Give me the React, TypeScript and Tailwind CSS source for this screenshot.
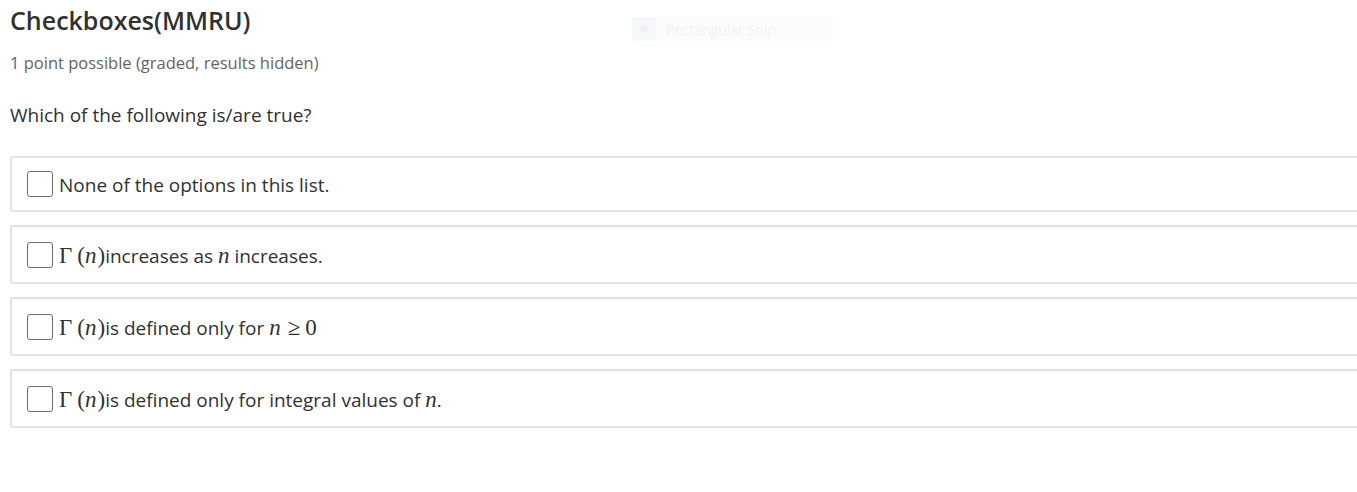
const font = { fontFamily: '"Open Sans", "Noto Sans", sans-serif' };

function Gamma() {
  return (
    <span className="font-['Liberation_Serif',serif] text-[23px] leading-none">
      Γ<span className="ml-[5px]">(</span>
      <i className="mr-[1px]">n</i>)
    </span>
  );
}

function N() {
  return <i className="font-['Liberation_Serif',serif] text-[23px] leading-none">n</i>;
}

const options: React.ReactNode[] = [
  <>None of the options in this list.</>,
  <>
    <Gamma />
    increases as <N /> increases.
  </>,
  <>
    <Gamma />
    is defined only for <N />
    <span className="font-['Liberation_Serif',serif] text-[23px] leading-none ml-[7px]">≥</span>
    <span className="font-['Liberation_Serif',serif] text-[23px] leading-none ml-[5px]">0</span>
  </>,
  <>
    <Gamma />
    is defined only for integral values of <N />.
  </>,
];

export default function App() {
  return (
    <div className="relative min-h-[492px] bg-white pl-[10px] pt-[3px] overflow-hidden" style={font}>
      {/* faint screen-snip overlay */}
      <div className="absolute left-[632px] top-[17px] flex h-[24px] w-[201px] items-center bg-[#fbfcfe]">
        <div className="flex h-[24px] w-[24px] items-center justify-center bg-[#f6f9fc]">
          <div className="h-[8px] w-[8px] rounded-full bg-[#f6eeee]" />
        </div>
        <span className="ml-[10px] text-[14px] text-[#f1f2f4]">Rectangular Snip</span>
      </div>

      <h1 className="text-[25px] font-semibold leading-[34px] text-[#313131]">Checkboxes(MMRU)</h1>
      <p className="mt-[14px] text-[16.5px] leading-[24px] text-[#646464]">1 point possible (graded, results hidden)</p>
      <p className="mt-[27px] text-[19px] leading-[26px] text-[#313131]">Which of the following is/are true?</p>

      <div className="mt-[28px] flex flex-col gap-[13px] -mr-[20px]">
        {options.map((o, i) => (
          <div
            key={i}
            className={`flex items-center rounded-[3px] border-2 border-[#e2e2e2] pl-[15px] ${i === 0 ? "h-[56px]" : "h-[59px]"}`}
          >
            <span className="h-[26px] w-[26px] shrink-0 rounded-[3px] border border-[#6e6e6e] bg-white" />
            <span className="ml-[6px] pt-[3px] flex items-baseline text-[19px] text-[#313131] whitespace-pre">{o}</span>
          </div>
        ))}
      </div>
    </div>
  );
}
